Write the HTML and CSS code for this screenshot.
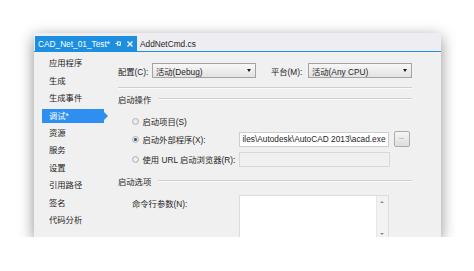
FILE: index.html
```html
<!DOCTYPE html>
<html lang="zh">
<head>
    <meta charset="UTF-8">
    <title>CAD_Net_01_Test</title>
    <link rel="stylesheet" href="styles.css">
</head>
<body>

<div class="window">
    <div class="tab-bar">
        <div class="tab active">
            <span>CAD_Net_01_Test*</span>
            <svg class="pin" width="7" height="7" viewBox="0 0 7 7">
                <path d="M0.5 3.5H2.5M2.5 1.5V5.5M2.5 2H5.5V5H2.5M4 5H5.5" stroke="#fff" stroke-width="1" fill="none"/>
            </svg>
            <svg class="close" width="6" height="6" viewBox="0 0 6 6">
                <path d="M0.5 0.5L5.5 5.5M5.5 0.5L0.5 5.5" stroke="#fff" stroke-width="1.3"/>
            </svg>
        </div>
        <div class="tab">AddNetCmd.cs</div>
    </div>

    <div class="main">
        <ul class="sidebar">
            <li>应用程序</li>
            <li>生成</li>
            <li>生成事件</li>
            <li class="selected">调试*</li>
            <li>资源</li>
            <li>服务</li>
            <li>设置</li>
            <li>引用路径</li>
            <li>签名</li>
            <li>代码分析</li>
        </ul>

        <div class="content">
            <div class="config-row">
                <span class="cfg-label">配置(C):</span>
                <div class="select"><span>活动(Debug)</span><i class="arrow"></i></div>
                <span class="cfg-label second">平台(M):</span>
                <div class="select"><span>活动(Any CPU)</span><i class="arrow"></i></div>
            </div>

            <div class="divider"></div>

            <div class="group-title"><span>启动操作</span><div class="group-line"></div></div>

            <div class="radio-row first">
                <i class="radio"></i><span class="opt-label">启动项目(S)</span>
            </div>
            <div class="radio-row">
                <i class="radio checked"></i><span class="opt-label">启动外部程序(X):</span>
                <div class="textbox path">iles\Autodesk\AutoCAD 2013\acad.exe</div>
                <div class="browse">...</div>
            </div>
            <div class="radio-row third">
                <i class="radio"></i><span class="opt-label">使用 URL 启动浏览器(R):</span>
                <div class="textbox disabled"></div>
            </div>

            <div class="group-title second"><span>启动选项</span><div class="group-line"></div></div>

            <div class="args-row">
                <span class="args-label">命令行参数(N):</span>
                <div class="textarea">
                    <div class="scrollbar">
                        <i class="sb-up"></i>
                        <i class="sb-down"></i>
                    </div>
                </div>
            </div>
        </div>
    </div>
</div>

</body>
</html>
```

FILE: styles.css
```css
body {
    margin: 0;
    padding: 33px 0 0 34px;
    background-color: #ffffff;
    font-family: 'Liberation Sans', 'Noto Sans CJK SC', sans-serif;
    font-size: 8.3px;
    color: #1e1e1e;
}

.window {
    width: 407px;
    height: 204px;
    overflow: hidden;
    background-color: #f0f0f0;
    box-shadow: 0 4px 14px rgba(0, 0, 0, 0.45);
    display: flex;
    flex-direction: column;
}

/* tab strip */
.tab-bar {
    flex-shrink: 0;
    display: flex;
    align-items: stretch;
    height: 15px;
    padding: 3px 0 0 1px;
    background-color: #eeeef2;
    border-bottom: 1.5px solid #1c8fe0;
}

.tab {
    display: flex;
    align-items: center;
    padding: 0 3px;
    white-space: nowrap;
}

.tab.active {
    width: 96px;
    background-color: #1c8fe0;
    color: #ffffff;
    padding-left: 3px;
}

.tab .pin {
    margin-left: 5px;
}

.tab .close {
    margin-left: 5px;
}

/* body */
.main {
    flex: 1;
    min-height: 0;
    display: flex;
}

.sidebar {
    list-style: none;
    margin: 0;
    padding: 3px 0 0 8px;
    width: 66px;
}

.sidebar li {
    position: relative;
    height: 17.5px;
    line-height: 17.5px;
    padding-left: 7px;
    width: 55px;
}

.sidebar li.selected {
    background-color: #2f8ff0;
    color: #ffffff;
    height: 14px;
    line-height: 14px;
    margin: 1.7px 0 1.8px;
}

.sidebar li.selected::after {
    content: '';
    position: absolute;
    right: -4px;
    top: 3px;
    border-left: 4px solid #2f8ff0;
    border-top: 4px solid transparent;
    border-bottom: 4px solid transparent;
}

.content {
    flex: 1;
    padding: 11px 29px 0 11px;
    display: flex;
    flex-direction: column;
}

.config-row {
    flex-shrink: 0;
    display: flex;
    align-items: center;
    height: 15px;
}

.cfg-label {
    width: 34px;
}

.cfg-label.second {
    width: 37px;
    margin-left: 15px;
}

.select {
    box-sizing: border-box;
    width: 104px;
    height: 15px;
    border: 1px solid #a3a3a3;
    background: linear-gradient(#f7f7f7, #e3e3e3);
    display: flex;
    align-items: center;
    justify-content: space-between;
    padding: 0 4px 0 3px;
}

.arrow {
    border-top: 3px solid #1a1a1a;
    border-left: 2.5px solid transparent;
    border-right: 2.5px solid transparent;
}

.divider {
    flex-shrink: 0;
    margin-top: 9px;
    height: 0;
    border-top: 1px solid #cfcfcf;
    border-bottom: 1px solid #fbfbfb;
}

.group-title {
    flex-shrink: 0;
    display: flex;
    align-items: center;
    height: 19px;
}

.group-title.second {
    margin-top: 3.5px;
}

.group-line {
    flex: 1;
    margin-left: 7px;
    border-top: 1px solid #cfcfcf;
    border-bottom: 1px solid #fbfbfb;
}

.radio-row {
    flex-shrink: 0;
    display: flex;
    align-items: center;
    height: 18px;
    padding-left: 14px;
}

.radio-row.first {
    margin-top: 4px;
}

.radio-row.third {
    margin-top: 2.5px;
    height: 17px;
}

.radio {
    box-sizing: border-box;
    width: 7px;
    height: 7px;
    border-radius: 50%;
    border: 1px solid #b4b4b4;
    background: radial-gradient(#f4f4f4, #dcdcdc);
    display: flex;
    align-items: center;
    justify-content: center;
}

.radio.checked::after {
    content: '';
    width: 3px;
    height: 3px;
    border-radius: 50%;
    background-color: #2c4a6b;
}

.opt-label {
    width: 96px;
    margin-left: 3.5px;
    white-space: nowrap;
}

.textbox {
    box-sizing: border-box;
    width: 150px;
    height: 15px;
    border: 1px solid #cdcdcd;
    background-color: #ffffff;
}

.textbox.path {
    display: flex;
    justify-content: flex-end;
    align-items: center;
    white-space: nowrap;
    padding-right: 2px;
}

.textbox.disabled {
    width: 151px;
    background-color: #f0f0f0;
    border-color: #d8d8d8;
}

.browse {
    box-sizing: border-box;
    width: 16px;
    height: 16px;
    margin-left: 5px;
    border: 1px solid #ababab;
    border-radius: 2px;
    background: linear-gradient(#f5f5f5, #dedede);
    font-size: 6px;
    text-align: center;
    line-height: 11px;
}

.args-row {
    flex-shrink: 0;
    display: flex;
    margin-top: 5px;
    padding-left: 14px;
}

.args-label {
    width: 107px;
    padding-top: 2px;
}

.textarea {
    box-sizing: border-box;
    width: 150px;
    height: 50px;
    border: 1px solid #dcdcdc;
    background-color: #ffffff;
    display: flex;
    justify-content: flex-end;
}

.scrollbar {
    width: 11px;
    background-color: #f2f2f2;
    border-left: 1px solid #e6e6e6;
    position: relative;
}

.sb-up, .sb-down {
    position: absolute;
    left: 3px;
    border-left: 2.5px solid transparent;
    border-right: 2.5px solid transparent;
}

.sb-up {
    top: 5px;
    border-bottom: 2.5px solid #8a8a8a;
}

.sb-down {
    top: 37px;
    border-top: 2.5px solid #8a8a8a;
}
```
